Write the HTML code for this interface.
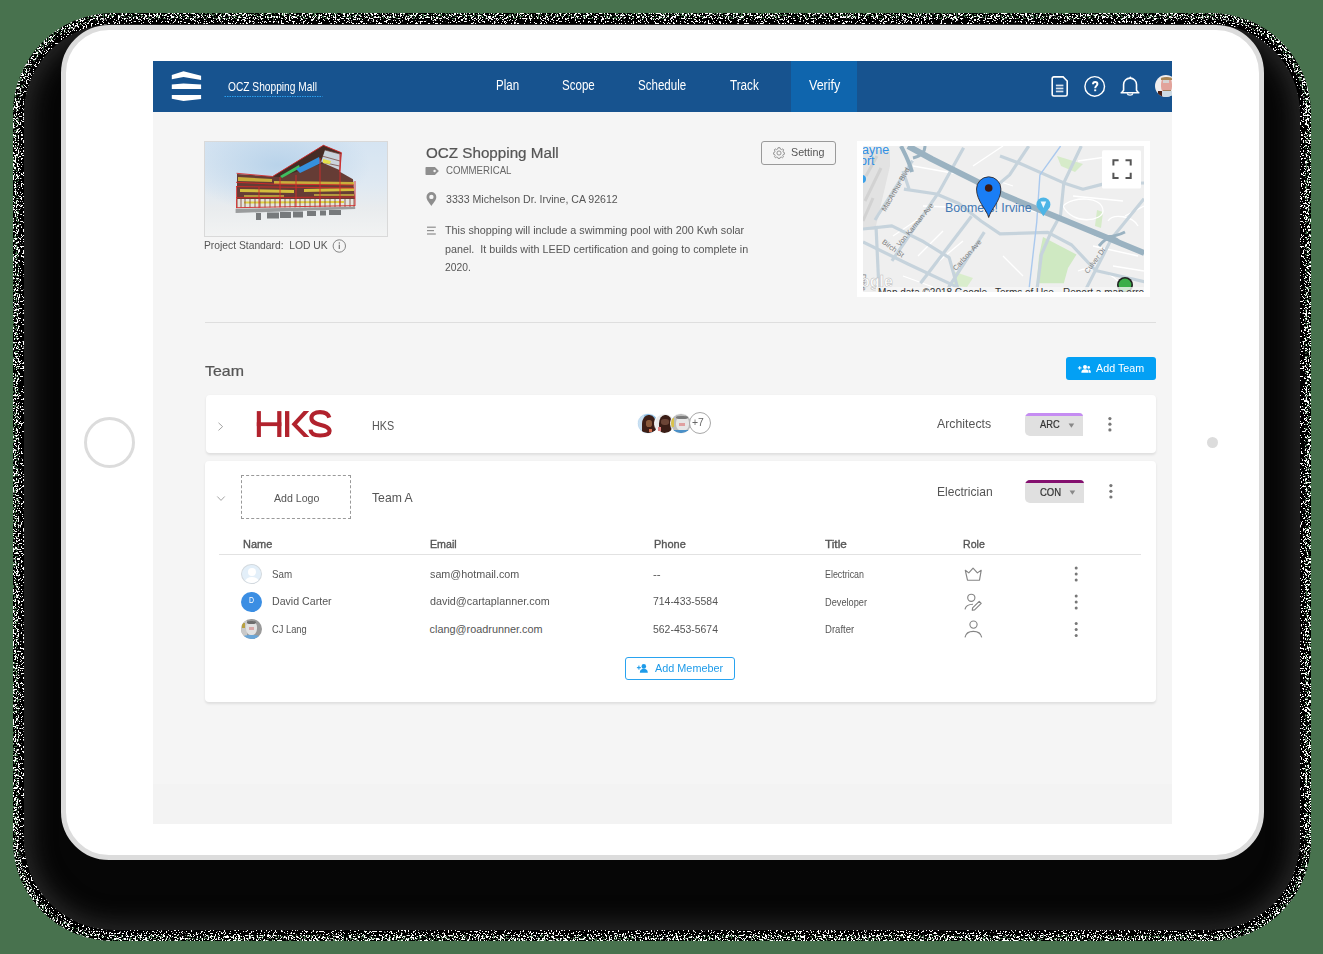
<!DOCTYPE html>
<html><head><meta charset="utf-8">
<style>
*{margin:0;padding:0;box-sizing:border-box}
html,body{width:1323px;height:954px;overflow:hidden;background:#48724e;font-family:"Liberation Sans",sans-serif}
.a{position:absolute}
.t{position:absolute;white-space:nowrap;line-height:1;transform-origin:0 0}
#shadow{left:13px;top:13px;width:1298px;height:928px}
#shin{left:11px;top:11px;width:1276px;height:906px;border-radius:90px;background:#060606;box-shadow:inset 0 0 22px 8px #262626}
#dev{left:61px;top:25px;width:1203px;height:835px;border-radius:48px;background:#fff;border:5px solid #dcdcdc}
#home{left:84px;top:417px;width:51px;height:51px;border-radius:50%;border:3px solid #dcdcdc}
#dot{left:1207px;top:437px;width:11px;height:11px;border-radius:50%;background:#dcdcdc}
#screen{left:153px;top:61px;width:1019px;height:763px;background:#f5f5f5;overflow:hidden}
#hdr{left:153px;top:61px;width:1019px;height:51px;background:#17538f}
.nav{color:#fff;font-size:14px;top:78.8px}
.g{color:#555}
.card{position:absolute;background:#fff;border-radius:4px;box-shadow:0 1.5px 2.5px rgba(0,0,0,.09)}
</style></head>
<body>
<div id="shadow" class="a">
  <svg class="a" style="left:0;top:0" width="1298" height="928">
    <defs>
      <filter id="nz" x="0" y="0" width="100%" height="100%" color-interpolation-filters="sRGB">
        <feTurbulence type="fractalNoise" baseFrequency="0.55" numOctaves="2" seed="3"/>
        <feColorMatrix type="matrix" values="0 0 0 0 1  0 0 0 0 1  0 0 0 0 1  40 0 0 0 -21.5"/>
      </filter>
      <filter id="nz2" x="0" y="0" width="100%" height="100%" color-interpolation-filters="sRGB">
        <feTurbulence type="fractalNoise" baseFrequency="0.6" numOctaves="2" seed="11"/>
        <feColorMatrix type="matrix" values="0 0 0 0 0.282  0 0 0 0 0.447  0 0 0 0 0.306  40 0 0 0 -24.5"/>
      </filter>
      <filter id="nz3" x="0" y="0" width="100%" height="100%" color-interpolation-filters="sRGB">
        <feTurbulence type="fractalNoise" baseFrequency="0.6" numOctaves="2" seed="7"/>
        <feColorMatrix type="matrix" values="0 0 0 0 1  0 0 0 0 1  0 0 0 0 1  40 0 0 0 -24"/>
      </filter>
      <clipPath id="cpo"><rect x="0" y="0" width="1298" height="928" rx="100"/></clipPath>
      <clipPath id="cpi"><rect x="6" y="6" width="1286" height="916" rx="94"/></clipPath>
    </defs>
    <g clip-path="url(#cpo)">
      <rect width="1298" height="928" fill="#000"/>
      <rect width="1298" height="928" filter="url(#nz)"/>
      <rect width="1298" height="928" filter="url(#nz2)"/>
    </g>
    <g clip-path="url(#cpi)">
      <rect width="1298" height="928" fill="#000"/>
      <rect width="1298" height="928" filter="url(#nz3)"/>
    </g>
  </svg>
  <div id="shin" class="a"></div>
</div>
<div id="dev" class="a"></div>
<div id="home" class="a"></div>
<div id="dot" class="a"></div>
<div id="screen" class="a"></div>

<!-- HEADER -->
<div id="hdr" class="a"></div>
<svg class="a" style="left:0;top:0" width="1323" height="120">
  <path fill="#fff" d="M171.8 75.1 L183.5 71.3 L201.1 75.8 L201.1 79.9 L183.5 76.9 L171.8 79.2Z"/>
  <path fill="#fff" d="M171.8 84.4 L183.5 83.6 L201.1 84.6 L201.1 89.1 L171.8 89.1Z"/>
  <path fill="#fff" d="M171.8 95 L201.1 95 L201.1 98.9 L183.5 101.1 L171.8 98.8Z"/>
  <line x1="224.5" y1="96.5" x2="322.5" y2="96.5" stroke="#2aa0f0" stroke-width="1" stroke-dasharray="1.5 1"/>
</svg>
<div class="a" style="left:791px;top:61px;width:66px;height:51px;background:#0f65ad"></div>

<!-- header icons -->
<svg class="a" style="left:1040px;top:66px" width="132" height="40">
  <g fill="none" stroke="#fff" stroke-width="1.6">
    <path d="M13.9 10.9 h9.2 l4.1 4.1 v13.3 a1.7 1.7 0 0 1 -1.7 1.7 h-11.6 a1.7 1.7 0 0 1 -1.7 -1.7 v-15.7 a1.7 1.7 0 0 1 1.7 -1.7z"/>
    <circle cx="54.7" cy="20.4" r="9.8" stroke-width="1.45"/>
  </g>
  <g fill="#d8e2ee"><rect x="15.9" y="18.6" width="7.5" height="1.7"/><rect x="15.9" y="21.6" width="7.5" height="1.7"/><rect x="15.9" y="24.6" width="7.5" height="1.7"/></g>
  <path d="M53 18.3 C53 16.6 53.9 15.9 55.2 15.9 C56.5 15.9 57.4 16.7 57.4 17.9 C57.4 19.8 55.2 20 55.2 22.2" fill="none" stroke="#fff" stroke-width="2"/><rect x="54.2" y="23.4" width="2" height="1.8" fill="#fff"/>
  <path fill="none" stroke="#fff" stroke-width="1.6" stroke-linejoin="round" d="M80.6 26.7 H99.4 M81.6 26.7 L83.6 24.3 V18.6 A6.45 6.45 0 0 1 96.5 18.6 V24.3 L98.4 26.7"/>
  <path fill="none" stroke="#fff" stroke-width="1.4" d="M87.2 27.3 A2.9 2.3 0 0 0 92.9 27.3"/>
  <circle cx="90.4" cy="11.3" r="0.9" fill="#fff"/>
</svg>
<div class="a" style="left:154px;top:61px;width:1018px;height:51px;overflow:hidden;pointer-events:none">
  <div class="a" style="left:1000.7px;top:14px;width:22.2px;height:22.2px;border-radius:50%;background:#f0eeee;overflow:hidden">
    <div class="a" style="left:6.5px;top:2px;width:10.8px;height:15.5px;border-radius:45% 45% 40% 40%;background:#e2a39b"></div>
    <div class="a" style="left:6.5px;top:1.6px;width:10.8px;height:3px;border-radius:50% 50% 0 0;background:#a88655"></div>
    <div class="a" style="left:8.5px;top:5px;width:6px;height:3px;background:#d6d3d3"></div>
    <div class="a" style="left:8px;top:14.5px;width:8px;height:1.5px;background:#a4805a"></div>
    <div class="a" style="left:3px;top:15.5px;width:5px;height:7px;background:#4a1e14"></div>
    <div class="a" style="left:7.5px;top:16px;width:10px;height:7px;background:#cfdbe3"></div>
  </div>
</div>
<div class="a" style="left:153px;top:784px;width:1019px;height:40px;background:#f3f3f3"></div>

<!-- project image -->
<svg class="a" style="left:204px;top:141px" width="184" height="96">
  <defs>
    <linearGradient id="sky" x1="0" y1="0" x2="0" y2="1">
      <stop offset="0" stop-color="#d5e4f2"/><stop offset="0.45" stop-color="#dfe9f2"/><stop offset="0.7" stop-color="#e9ecee"/><stop offset="1" stop-color="#f2f3f3"/>
    </linearGradient>
    <radialGradient id="sky2" cx="0.4" cy="0.25" r="0.5"><stop offset="0" stop-color="#b9d3ea"/><stop offset="1" stop-color="#b9d3ea" stop-opacity="0"/></radialGradient>
  </defs>
  <rect x="0" y="0" width="184" height="96" fill="url(#sky)"/>
  <rect x="0" y="0" width="184" height="96" fill="url(#sky2)"/>
  
  <rect x="0.5" y="0.5" width="183" height="95" fill="none" stroke="#d9d9d9"/>
  <!-- building -->
  <path d="M33 33 L68.6 35.5 L119.4 4.3 L137.4 11.7 L135.8 30.7 L149 38.2 L151 58 L33 58Z" fill="#5a2a20" opacity="0.9"/>
  <path d="M68.6 35.5 L119.4 4.3 L137.4 11.7 L136 17 L76 36Z" fill="#3b2720" opacity="0.75"/>
  <path d="M121 9 L136.5 13 L135.5 29 L117 21Z" fill="#d6e4ef" opacity="0.9"/><path d="M121 9 L136 13 M118 15 L136 20 M117 21 L135.5 25" stroke="#6a3a30" stroke-width="0.7"/>
  <path d="M76 35 L95 24 L96 27 L78 37Z" fill="#3fbf5f"/>
  <path d="M92 28 L115 16 L117 22 L96 32Z" fill="#3590dd"/>
  <path d="M119 18 L127 20 L126 23 L119 22Z" fill="#e6e04a"/>
  <path d="M34 36 L68 38 L68 41 L34 40Z M70 40 L150 41 L150 44 L70 43Z" fill="#d9c23c" opacity="0.85"/>
  <path d="M36 48 L90 49 L90 52 L36 51Z M100 48 L150 47 L150 50 L100 51Z" fill="#e0cc3e" opacity="0.9"/>
  <path d="M40 54 L80 54 L80 56 L40 56Z M110 53 L150 53 L150 55 L110 55Z" fill="#c8b040" opacity="0.8"/>
  <rect x="33" y="58" width="118" height="8.7" fill="#e4e4de"/>
  <path d="M40 60.5 L140 60 L140 62 L40 62.5Z" fill="#e0d040"/>
  <path d="M33.0 58 V66.5 M37.0 58 V66.5 M41.0 58 V66.5 M46.0 58 V66.5 M51.0 58 V66.5 M56.0 58 V66.5 M61.0 58 V66.5 M66.0 58 V66.5 M71.0 58 V66.5 M76.0 58 V66.5 M81.0 58 V66.5 M86.0 58 V66.5 M91.0 58 V66.5 M96.0 58 V66.5 M101.0 58 V66.5 M106.0 58 V66.5 M111.0 58 V66.5 M116.0 58 V66.5 M121.0 58 V66.5 M126.0 58 V66.5 M131.0 58 V66.5 M136.0 58 V66.5 M141.0 58 V66.5 M146.0 58 V66.5 M150.0 58 V66.5 " stroke="#7a3a2a" stroke-width="0.8" fill="none"/>
  <g stroke="#d42a2a" stroke-width="0.9" fill="none">
    <path d="M32.6 32.3 L68.6 35.5 L119.4 4.3 L137.4 11.7 L135.8 30.7"/>
    <path d="M32 41.3 L68 43 L150 44"/><path d="M32 45.6 L150 47"/><path d="M32 56.7 L151 56"/><path d="M32 66.7 L151 64.6"/>
    <path d="M32.6 45 V67 M55 46 V67 M76 36 V66 M92 34 V66 M116 17 V66 M136 12 V65 M151 40 V65"/>
  </g>
  <path d="M31.6 67.8 L151.2 65.7 L151.2 68 L31.6 72Z" fill="#9a9c9d"/>
  <path d="M52 72 h5 v7 h-5z M63 71.5 h12 v6 h-12z M76 71 h11 v6 h-11z M89 70.5 h10 v6 h-10z M103 70 h9 v5 h-9z M116 69.5 h6 v5 h-6z M125 69 h12 v5 h-12z" fill="#777a7c"/>
</svg>
<svg class="a" style="left:330px;top:237px" width="18" height="18">
  <circle cx="9.3" cy="9" r="6.2" fill="none" stroke="#777" stroke-width="0.9"/>
  <rect x="8.7" y="7.6" width="1.2" height="4.4" fill="#777"/><circle cx="9.3" cy="6" r="0.75" fill="#777"/>
</svg>

<!-- project detail icons -->
<svg class="a" style="left:420px;top:160px" width="24" height="120">
  <path d="M6.3 7 h8.6 l4 4 l-4 4 h-8.6 a0.8 0.8 0 0 1 -0.8 -0.8 v-6.4 a0.8 0.8 0 0 1 0.8 -0.8z" fill="#8e8e8e"/>
  <circle cx="14.6" cy="11" r="1.2" fill="#f5f5f5"/>
  <path d="M11.4 46 c-1.4-2.3-4.9-5.7-4.9-9 a4.9 4.9 0 0 1 9.8 0 c0 3.3-3.5 6.7-4.9 9z" fill="#8e8e8e"/>
  <circle cx="11.4" cy="36.9" r="2.2" fill="#f5f5f5"/>
  <g fill="#8e8e8e"><rect x="7" y="66.6" width="8.8" height="1.2"/><rect x="7" y="70" width="7" height="1.2"/><rect x="7" y="73.4" width="8.8" height="1.2"/></g>
</svg>

<!-- setting button -->
<div class="a" style="left:761px;top:141px;width:75px;height:24px;border:1px solid #9a9a9a;border-radius:3px"></div>
<svg class="a" style="left:771px;top:145px" width="16" height="16">
  <g transform="translate(8 8) scale(0.9)" fill="none" stroke="#8a8a8a" stroke-width="1">
    <path d="M-1.1 -5.9 L1.1 -5.9 L1.5 -4.4 L2.8 -3.8 L4.2 -4.6 L5.2 -3.4 L4.4 -2.1 L4.9 -0.8 L6 -0.4 L6 1.4 L4.7 1.7 L4.2 3 L5 4.3 L3.8 5.3 L2.5 4.5 L1.2 5 L1 6 L-1 6 L-1.3 5 L-2.6 4.5 L-3.9 5.3 L-5 4.2 L-4.3 3 L-4.8 1.7 L-6 1.4 L-6 -0.4 L-4.9 -0.8 L-4.4 -2.1 L-5.2 -3.4 L-4.2 -4.6 L-2.8 -3.8 L-1.5 -4.4Z"/>
    <circle r="2.3"/>
  </g>
</svg>

<!-- map -->
<div class="a" style="left:857px;top:141px;width:293px;height:156px;background:#fff"></div>
<svg class="a" style="left:863px;top:146px" width="281" height="146" overflow="hidden">
  <rect width="281" height="146" fill="#efefef"/>
  <!-- airport -->
  <path d="M0 4 L27 4 L27 20 L12 84 L0 84Z" fill="#e2e2e2"/>
  <path d="M3 30 L14 10 M2 55 L18 22 M0 75 L10 52" stroke="#d2d2d2" stroke-width="3"/>
  <!-- greens -->
  <path d="M180 91 L213.5 108.6 L205 122 L200.8 137.3 L173.7 137.3 L176 110Z" fill="#cfe9c2"/>
  <path d="M194 10 L220 18 L212 26 L198 20Z" fill="#d6ebc9"/>
  <path d="M234 64 L240 66 L238 82 L232 80Z" fill="#d6ebc9"/>
  <path d="M92 126 L110 132 L104 141 L90 140Z" fill="#d9edcc"/>
  <!-- minor white roads -->
  <g stroke="#fff" stroke-width="1.3" fill="none">
    <path d="M50 20 L95 28 M60 60 L110 62 M30 90 L60 70 M55 110 L80 85 M70 120 L100 95 M110 20 L140 0 M120 30 L150 40 M150 60 L190 70 M210 50 L260 55 M230 100 L275 110 M250 120 L281 125 M215 15 L250 10 M240 25 L270 40 M262 70 L281 60 M140 110 L160 130 M40 130 L70 141"/>
    <path d="M200 60 c10-10 40-10 40 5 c0 10-30 15-40-5z M245 75 c5-8 25-5 30 5 M215 125 c10-5 30 0 40 10"/>
    <path d="M15 70 L50 14" stroke-width="2.4"/>
  </g>
  <!-- major roads -->
  <g stroke="#c6d3dc" stroke-width="3.2" fill="none" stroke-linejoin="round">
    <path d="M0 83 L28.9 79.9 L60.7 95.8 L86.2 111.7 L95.8 146"/>
    <path d="M13 79.9 L16.1 146"/>
    <path d="M12 74 L49.6 14.5"/>
    <path d="M40.9 43.2 L73.5 48 L95.8 57.5 L118 75 L137 87.9 L184.8 86.3 L208.7 99 L232.6 124.5 L281.3 135.7"/>
    <path d="M100.6 1.8 L76.7 44.8 L28.9 114.9"/>
    <path d="M0 96 L45 118 L92.6 140.4 L100 146"/>
    <path d="M121.3 86.2 L86.2 140.4 L84 146"/>
    <path d="M108.5 70.3 L57.5 137.2"/>
    <path d="M137 10 L157.7 17.7 L200.8 36.9 L219.9 43.2 L239 38.4 L281 37"/>
    <path d="M218.3 0 L200.8 36.9 L197.6 68.7 L188 86.3 L178.4 108.6 L173.7 146"/>
    <path d="M165.7 0 L146.6 28.9 L137 37 L118 43"/>
    <path d="M281 52.8 L248.6 92.6 L221.5 146"/>
    <path d="M40 25 L46 43"/>
  </g>
  <path d="M197.6 0 L176.9 28.9 L173.7 76.7 L165.7 146" stroke="#aac9ee" stroke-width="1.4" fill="none"/>
  <!-- highway -->
  <g stroke="#9ab2c1" fill="none" stroke-linejoin="round">
    <path d="M45 0 L68.7 13 L142 49.6 L281.3 107" stroke-width="6"/>
    <path d="M38 0 C42 8 46 15 49 26" stroke-width="4"/>
    <path d="M62 0 C62 6 58 10 50 12" stroke-width="3"/>
    <path d="M228 86 C238 92 250 92 262 86 M236 100 C244 90 252 88 260 100" stroke-width="3"/>
  </g>
  <text x="-1" y="7.8" font-family="Liberation Sans" font-size="12.5" fill="#2e8fe4">ayne</text>
  <text x="-3" y="18.8" font-family="Liberation Sans" font-size="12.5" fill="#2e8fe4">ort</text>
  <circle cx="-1" cy="33" r="4" fill="#3aa0e8"/>
  <g font-family="Liberation Sans" font-size="7.2" fill="#7c7c7c">
    <text transform="translate(22.5 66) rotate(-60)">MacArthur Blvd</text>
    <text transform="translate(37 101) rotate(-50.5)">Von Karman Ave</text>
    <text transform="translate(18.5 97) rotate(36)">Birch St</text>
    <text transform="translate(93 125) rotate(-48)">Carlson Ave</text>
    <text transform="translate(225 128) rotate(-53.6)">Culver Dr</text>
    <text transform="translate(-2 128) rotate(90)">Drive</text>
  </g>
  <text x="82" y="66.3" font-family="Liberation Sans" font-size="12.9" fill="#4378b3" transform="translate(82 0) scale(0.96 1) translate(-82 0)">Boomers! Irvine</text>
  <circle cx="180.4" cy="58.4" r="7" fill="#4db5e6"/><path d="M175.4 62.5 L180.4 70.3 L185.4 62.5Z" fill="#4db5e6"/>
  <path d="M177.6 55.5 h5.6 l-2.8 6.5z" fill="#fff" opacity="0.9"/>
  <path d="M125.7 71.5 C123.5 63 113.5 55 113.5 43 A12.2 12.2 0 0 1 137.9 43 C137.9 55 127.9 63 125.7 71.5Z" fill="#1a7ef5" stroke="#2a1a14" stroke-width="0.8"/>
  <circle cx="125.7" cy="42" r="3.8" fill="#3b1a14"/>
  <rect x="239" y="4.2" width="39" height="38.2" fill="#fff" rx="1.5"/>
  <path d="M250.4 19.5 v-5.2 h5.2 M262.5 14.3 h5.2 v5.2 M267.7 26.8 v5.2 h-5.2 M255.6 32 h-5.2 v-5.2" stroke="#555" stroke-width="2" fill="none"/>
  <text x="-3" y="141" font-family="Liberation Sans" font-size="16" font-weight="700" fill="#fff" stroke="#bbb" stroke-width="0.5">ogle</text>
  <circle cx="262" cy="139" r="8" fill="#222"/><circle cx="262" cy="139" r="6.4" fill="#3cae4a"/>
  <rect x="13" y="141" width="268" height="5" fill="#f6f6f6" opacity="0.8"/>
  <g font-family="Liberation Sans" font-size="10" fill="#333">
    <text x="15" y="150">Map data ©2018 Google</text><text x="132" y="150">Terms of Use</text><text x="200" y="150">Report a map error</text>
  </g>
  </svg>

<!-- separator -->
<div class="a" style="left:204.5px;top:321.5px;width:951px;height:1px;background:#dedede"></div>

<!-- Add Team button -->
<div class="a" style="left:1066px;top:357px;width:89.5px;height:23.3px;background:#03a0f4;border-radius:3px"></div>
<svg class="a" style="left:1076px;top:362px" width="16" height="14">
  <g fill="#fff">
    <circle cx="9" cy="4.9" r="2"/><path d="M5.3 10.8 c0-2.8 1.6-3.6 3.7-3.6 s3.7 0.8 3.7 3.6z"/>
    <circle cx="12.7" cy="5.4" r="1.3"/><path d="M12.3 7.6 c1.4 0 2.6 0.8 2.6 3.2 h-1.8z"/>
    <rect x="1.9" y="5.4" width="3.6" height="1"/><rect x="3.2" y="4.1" width="1" height="3.6"/>
  </g>
</svg>

<!-- HKS card -->
<div class="card" style="left:205.5px;top:395.2px;width:950.5px;height:58px"></div>
<svg class="a" style="left:214px;top:418px" width="14" height="16"><path d="M4.5 4.8 L8.6 8.6 L4.5 12.4" fill="none" stroke="#999" stroke-width="0.9"/></svg>
<svg class="a" style="left:254px;top:408px" width="82" height="32">
  <g fill="#b1222d">
    <rect x="2.8" y="3.1" width="4.1" height="25.9"/><rect x="23.2" y="3.1" width="4.2" height="25.9"/><rect x="2.8" y="14.3" width="24.6" height="3.8"/>
    <rect x="31" y="3.1" width="4.3" height="25.9"/>
    <path d="M49.7 3.1 L55.2 3.1 L43 16.2 L55.4 29 L49.8 29 L37.5 16.2Z"/>
  </g>
  <path d="M75.3 9.6 C74.2 5.6 70.5 4.1 66 4.1 C61 4.1 57.4 6.5 57.4 10.1 C57.4 14.2 61.2 15.5 66 16.8 C72 18.3 75.6 19.6 75.6 23.1 C75.6 26.6 71.6 27.5 66.2 27.5 C60.8 27.5 56.8 25.6 56.5 21.6" fill="none" stroke="#b1222d" stroke-width="4.1"/>
</svg>
<!-- avatars -->
<div class="a" style="left:637px;top:412.5px;width:21.5px;height:21.5px;border-radius:50%;overflow:hidden;background:#8fbfe3;border:1px solid #fff">
  <div class="a" style="left:0;top:0;width:6px;height:21px;background:#c9e0f2"></div>
  <div class="a" style="left:4px;top:1.5px;width:14px;height:20px;border-radius:45% 45% 10% 10%;background:#3e1f17"></div>
  <div class="a" style="left:8px;top:6px;width:6px;height:7px;border-radius:40%;background:#8a5a3c"></div>
  <div class="a" style="left:11px;top:15px;width:3px;height:3px;background:#d47050"></div>
</div>
<div class="a" style="left:653.5px;top:412.5px;width:21.5px;height:21.5px;border-radius:50%;overflow:hidden;background:#ececec;border:1px solid #fff">
  <div class="a" style="left:4.5px;top:1.5px;width:13px;height:19px;border-radius:45%;background:#3a1d16"></div>
  <div class="a" style="left:6.5px;top:5px;width:8px;height:6px;border-radius:40%;background:#6b4436"></div>
  <div class="a" style="left:3px;top:13px;width:3px;height:4px;background:#e08080"></div>
</div>
<div class="a" style="left:670px;top:412.5px;width:21.5px;height:21.5px;border-radius:50%;overflow:hidden;background:#bdbdbd;border:1px solid #fff">
  <div class="a" style="left:4.5px;top:2px;width:13px;height:15px;border-radius:45%;background:#e6e6e6"></div>
  <div class="a" style="left:5px;top:2px;width:12px;height:3px;border-radius:40%;background:#7a7a7a"></div>
  <div class="a" style="left:8px;top:9px;width:6px;height:3px;background:#e0a0a0"></div>
  <div class="a" style="left:2px;top:16px;width:17px;height:6px;background:#4a90c8"></div>
  <div class="a" style="left:0px;top:4px;width:3px;height:9px;background:#d9c24a"></div>
</div>
<div class="a" style="left:688.5px;top:412px;width:22px;height:22px;border-radius:50%;background:#fff;border:1px solid #a8a8a8"></div>
<div class="t" style="left:692.3px;top:417.3px;font-size:11.5px;color:#666;transform:scaleX(0.9)">+7</div>

<div class="card" style="left:205px;top:461px;width:950.5px;height:241px"></div>
<!-- chips -->
<div class="a" style="left:1025px;top:412.7px;width:58px;height:23px;background:#e0e0e0;border-radius:5px 4px 0 5px;overflow:hidden"><div class="a" style="left:0;top:0;width:58px;height:3px;background:#c58cf2"></div></div>
<svg class="a" style="left:1066px;top:420px" width="10" height="10"><path d="M2.6 3.6 h5.6 l-2.8 4.2z" fill="#888"/></svg>
<div class="a" style="left:1025.3px;top:479.8px;width:58.3px;height:23.2px;background:#e0e0e0;border-radius:5px 4px 0 5px;overflow:hidden"><div class="a" style="left:0;top:0;width:59px;height:3px;background:#84106f"></div></div>
<svg class="a" style="left:1066.5px;top:487px" width="10" height="10"><path d="M2.6 3.6 h5.6 l-2.8 4.2z" fill="#888"/></svg>

<!-- kebabs -->
<svg class="a" style="left:1100px;top:412px" width="20" height="100">
  <g fill="#777"><circle cx="9.9" cy="6.6" r="1.6"/><circle cx="9.9" cy="12.2" r="1.6"/><circle cx="9.9" cy="17.9" r="1.6"/>
  <circle cx="10.9" cy="73.6" r="1.6"/><circle cx="10.9" cy="79.3" r="1.6"/><circle cx="10.9" cy="85.0" r="1.6"/></g>
</svg>

<!-- Team A card -->
<svg class="a" style="left:214px;top:492px" width="14" height="14"><path d="M3.3 4.5 L7 8.4 L10.7 4.5" fill="none" stroke="#999" stroke-width="0.9"/></svg>
<div class="a" style="left:241.3px;top:475px;width:109.5px;height:44px;border:1px dashed #999"></div>
<div class="a" style="left:219px;top:554.2px;width:922px;height:1px;background:#e2e2e2"></div>

<!-- row avatars -->
<div class="a" style="left:241.2px;top:564.2px;width:20.5px;height:20px;border-radius:50%;background:#e3eff9;border:1px solid #d3d9de;overflow:hidden">
  <div class="a" style="left:5.5px;top:3px;width:8px;height:8px;border-radius:50%;background:#fff"></div>
  <div class="a" style="left:2.5px;top:12px;width:14px;height:10px;border-radius:50% 50% 0 0;background:#fff"></div>
</div>
<div class="a" style="left:241.2px;top:592px;width:20.5px;height:20px;border-radius:50%;background:#3b8ee3"></div>
<div class="t" style="left:248.9px;top:597.2px;font-size:8.2px;color:#fff;transform:scaleX(0.85)">D</div>
<div class="a" style="left:241.2px;top:619.1px;width:20.5px;height:20px;border-radius:50%;background:#9a9a9a;overflow:hidden">
  <div class="a" style="left:0;top:0;width:6px;height:20px;background:#c9c9c9"></div>
  <div class="a" style="left:1px;top:4px;width:3px;height:5px;background:#b8a040"></div>
  <div class="a" style="left:5px;top:2px;width:11px;height:14px;border-radius:45%;background:#e2e2e2"></div>
  <div class="a" style="left:6px;top:2px;width:9px;height:3px;border-radius:40%;background:#6d6d6d"></div>
  <div class="a" style="left:8px;top:8px;width:5px;height:3px;background:#d9a8a8"></div>
  <div class="a" style="left:2px;top:16px;width:17px;height:5px;border-radius:40% 40% 0 0;background:#6aa6d8"></div>
</div>
<!-- role icons -->
<svg class="a" style="left:960px;top:562px" width="28" height="80">
  <g fill="none" stroke="#858585" stroke-width="1.15" stroke-linejoin="round">
  <path d="M5.3 8.3 L8.8 10.9 L13.05 6.2 L17.4 10.9 L21.2 8.3 L19.5 18.2 H7.5 Z"/>
  <circle cx="11.3" cy="35.8" r="3.6"/>
  <path d="M5 47.4 C5.5 44.3 8.5 42.4 13 42.3"/>
  <path d="M12.3 48.3 L12.6 45.9 L19.2 39.3 L21.2 41.3 L14.6 47.9 Z"/>
  <circle cx="13.5" cy="62.6" r="3.6"/>
  <path d="M5 75.4 C5.8 71.4 9.3 69.4 13.3 69.4 C17.3 69.4 20.9 71.4 21.7 75.4"/>
  </g>
</svg>
<svg class="a" style="left:1066px;top:562px" width="20" height="80">
  <g fill="#777"><circle cx="10.2" cy="6" r="1.5"/><circle cx="10.2" cy="12" r="1.5"/><circle cx="10.2" cy="18" r="1.5"/>
  <circle cx="10.2" cy="34" r="1.5"/><circle cx="10.2" cy="40" r="1.5"/><circle cx="10.2" cy="46" r="1.5"/>
  <circle cx="10.2" cy="61.5" r="1.5"/><circle cx="10.2" cy="67.5" r="1.5"/><circle cx="10.2" cy="73.5" r="1.5"/></g>
</svg>

<!-- add member -->
<div class="a" style="left:625.2px;top:656.7px;width:109.5px;height:23.5px;border:1px solid #29a3f0;border-radius:3px"></div>
<svg class="a" style="left:634px;top:661px" width="18" height="14">
  <g fill="#1e9be9">
    <circle cx="9.8" cy="5.4" r="2.3"/><path d="M5.8 11.8 c0-3 1.8-4 4-4 s4 1 4 4z"/>
    <rect x="2.9" y="6.1" width="4" height="1.1"/><rect x="4.35" y="4.6" width="1.1" height="4"/>
  </g>
</svg>

<div class="t" id="htitle" style="left:227.50px;top:79.71px;font-size:13.04px;color:#fff;transform:scaleX(0.7819);">OCZ Shopping Mall</div>
<div class="t" id="n1" style="left:495.70px;top:78.38px;font-size:14.49px;color:#fff;transform:scaleX(0.7971);">Plan</div>
<div class="t" id="n2" style="left:562.20px;top:78.38px;font-size:14.49px;color:#fff;transform:scaleX(0.7988);">Scope</div>
<div class="t" id="n3" style="left:638.40px;top:78.38px;font-size:14.49px;color:#fff;transform:scaleX(0.7982);">Schedule</div>
<div class="t" id="n4" style="left:730.00px;top:78.38px;font-size:14.49px;color:#fff;transform:scaleX(0.8074);">Track</div>
<div class="t" id="n5" style="left:808.60px;top:78.38px;font-size:14.49px;color:#fff;transform:scaleX(0.8642);">Verify</div>
<div class="t" id="ptitle" style="left:426.30px;top:144.64px;font-size:15.36px;color:#555;-webkit-text-stroke:0.22px currentColor;transform:scaleX(0.9899);">OCZ Shopping Mall</div>
<div class="t" id="pcat" style="left:446.00px;top:165.48px;font-size:10.72px;color:#666;transform:scaleX(0.9008);">COMMERICAL</div>
<div class="t" id="paddr" style="left:446.00px;top:193.76px;font-size:10.87px;color:#555;transform:scaleX(0.9744);">3333 Michelson Dr. Irvine, CA 92612</div>
<div class="t" id="pd1" style="left:445.40px;top:225.19px;font-size:11.30px;color:#555;transform:scaleX(0.9549);">This shopping will include a swimming pool with 200 Kwh solar</div>
<div class="t" id="pd2" style="left:445.40px;top:243.79px;font-size:11.30px;color:#555;transform:scaleX(0.9523);">panel.&nbsp; It builds with LEED certification and going to complete in</div>
<div class="t" id="pd3" style="left:445.40px;top:262.29px;font-size:11.30px;color:#555;transform:scaleX(0.9120);">2020.</div>
<div class="t" id="pstd" style="left:204.40px;top:239.64px;font-size:11.01px;color:#555;transform:scaleX(0.9365);">Project Standard:&nbsp; LOD UK</div>
<div class="t" id="setting" style="left:790.70px;top:147.27px;font-size:11.45px;color:#555;transform:scaleX(0.9380);">Setting</div>
<div class="t" id="team" style="left:205.20px;top:363.93px;font-size:14.78px;color:#555;-webkit-text-stroke:0.22px currentColor;transform:scaleX(1.0782);">Team</div>
<div class="t" id="addteam" style="left:1095.80px;top:363.41px;font-size:10.58px;color:#fff;transform:scaleX(1.0148);">Add Team</div>
<div class="t" id="hks" style="left:371.90px;top:419.01px;font-size:13.04px;color:#555;transform:scaleX(0.8252);">HKS</div>
<div class="t" id="arch" style="left:937.00px;top:417.93px;font-size:12.32px;color:#555;transform:scaleX(1.0018);">Architects</div>
<div class="t" id="arc" style="left:1040.40px;top:419.46px;font-size:10.87px;color:#333;-webkit-text-stroke:0.22px currentColor;transform:scaleX(0.8571);">ARC</div>
<div class="t" id="elec" style="left:937.40px;top:485.73px;font-size:12.32px;color:#555;transform:scaleX(0.9800);">Electrician</div>
<div class="t" id="con" style="left:1040.40px;top:487.06px;font-size:10.87px;color:#333;-webkit-text-stroke:0.22px currentColor;transform:scaleX(0.8766);">CON</div>
<div class="t" id="addlogo" style="left:274.30px;top:491.82px;font-size:11.74px;color:#555;transform:scaleX(0.9039);">Add Logo</div>
<div class="t" id="teama" style="left:372.00px;top:492.33px;font-size:12.32px;color:#555;transform:scaleX(0.9927);">Team A</div>
<div class="t" id="hname" style="left:242.60px;top:538.76px;font-size:10.87px;color:#555;-webkit-text-stroke:0.35px currentColor;transform:scaleX(1.0101);">Name</div>
<div class="t" id="hemail" style="left:429.60px;top:538.76px;font-size:10.87px;color:#555;-webkit-text-stroke:0.35px currentColor;transform:scaleX(0.9818);">Email</div>
<div class="t" id="hphone" style="left:653.60px;top:538.77px;font-size:11.45px;color:#555;-webkit-text-stroke:0.35px currentColor;transform:scaleX(0.9614);">Phone</div>
<div class="t" id="htitle2" style="left:824.60px;top:538.77px;font-size:11.45px;color:#555;-webkit-text-stroke:0.35px currentColor;transform:scaleX(1.0290);">Title</div>
<div class="t" id="hrole" style="left:963.30px;top:538.77px;font-size:11.45px;color:#555;-webkit-text-stroke:0.35px currentColor;transform:scaleX(0.9265);">Role</div>
<div class="t" id="r1n" style="left:271.70px;top:568.76px;font-size:10.87px;color:#555;transform:scaleX(0.9023);">Sam</div>
<div class="t" id="r2n" style="left:271.70px;top:596.36px;font-size:10.87px;color:#555;transform:scaleX(0.9772);">David Carter</div>
<div class="t" id="r3n" style="left:271.70px;top:623.56px;font-size:10.87px;color:#555;transform:scaleX(0.8568);">CJ Lang</div>
<div class="t" id="r1e" style="left:429.60px;top:568.76px;font-size:10.87px;color:#555;transform:scaleX(0.9909);">sam@hotmail.com</div>
<div class="t" id="r2e" style="left:429.60px;top:596.36px;font-size:10.87px;color:#555;transform:scaleX(0.9947);">david@cartaplanner.com</div>
<div class="t" id="r3e" style="left:429.60px;top:623.56px;font-size:10.87px;color:#555;">clang@roadrunner.com</div>
<div class="t" id="r1p" style="left:652.80px;top:568.76px;font-size:10.87px;color:#555;transform:scaleX(1.0590);">--</div>
<div class="t" id="r2p" style="left:652.80px;top:595.96px;font-size:10.87px;color:#555;transform:scaleX(0.9604);">714-433-5584</div>
<div class="t" id="r3p" style="left:652.80px;top:623.61px;font-size:11.16px;color:#555;transform:scaleX(0.9352);">562-453-5674</div>
<div class="t" id="r1t" style="left:824.70px;top:569.80px;font-size:10.00px;color:#555;transform:scaleX(0.8883);">Electrican</div>
<div class="t" id="r2t" style="left:824.70px;top:597.70px;font-size:10.00px;color:#555;transform:scaleX(0.9212);">Developer</div>
<div class="t" id="r3t" style="left:824.70px;top:624.80px;font-size:10.00px;color:#555;transform:scaleX(0.9554);">Drafter</div>
<div class="t" id="addmem" style="left:655.00px;top:663.24px;font-size:11.01px;color:#1e9be9;transform:scaleX(0.9866);">Add Memeber</div>
</body></html>
